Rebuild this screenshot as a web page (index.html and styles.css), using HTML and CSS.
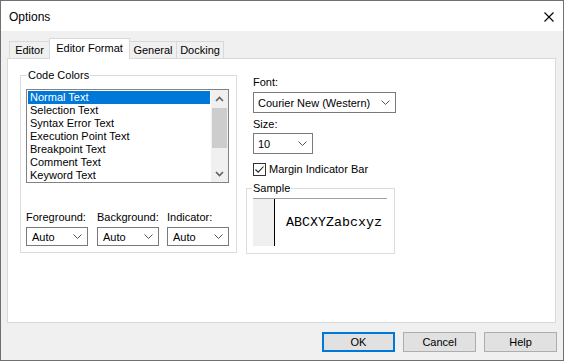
FILE: index.html
```html
<!DOCTYPE html>
<html>
<head>
    <meta charset="UTF-8">
    <link rel="stylesheet" href="styles.css">
</head>
<body>
    <div class="window">
        <div class="titlebar">
            <span class="title">Options</span>
            <svg class="close" width="10" height="10" viewBox="0 0 10 10">
                <path d="M0.5 0.5 L9.5 9.5 M9.5 0.5 L0.5 9.5" stroke="#000" stroke-width="1.1" fill="none"/>
            </svg>
        </div>

        <div class="dialog">
            <div class="tabs">
                <div class="tab tab-editor">Editor</div>
                <div class="tab tab-active">Editor Format</div>
                <div class="tab tab-general">General</div>
                <div class="tab tab-docking">Docking</div>
            </div>

            <div class="panel">
                <div class="group code-colors">
                    <span class="group-title">Code Colors</span>
                    <div class="listbox">
                        <div class="list-items">
                            <div class="list-item selected">Normal Text</div>
                            <div class="list-item">Selection Text</div>
                            <div class="list-item">Syntax Error Text</div>
                            <div class="list-item">Execution Point Text</div>
                            <div class="list-item">Breakpoint Text</div>
                            <div class="list-item">Comment Text</div>
                            <div class="list-item">Keyword Text</div>
                        </div>
                        <div class="scrollbar">
                            <div class="scroll-btn">
                                <svg width="9" height="6" viewBox="0 0 9 6"><path d="M1 5 L4.5 1.5 L8 5" stroke="#606060" stroke-width="1.6" fill="none"/></svg>
                            </div>
                            <div class="scroll-track">
                                <div class="scroll-thumb"></div>
                            </div>
                            <div class="scroll-btn">
                                <svg width="9" height="6" viewBox="0 0 9 6"><path d="M1 1 L4.5 4.5 L8 1" stroke="#606060" stroke-width="1.6" fill="none"/></svg>
                            </div>
                        </div>
                    </div>

                    <div class="color-pickers">
                        <div class="picker">
                            <label>Foreground:</label>
                            <div class="combo small">
                                <span>Auto</span>
                                <svg width="9" height="5" viewBox="0 0 9 5"><path d="M0.5 0.5 L4.5 4.5 L8.5 0.5" stroke="#555" stroke-width="1" fill="none"/></svg>
                            </div>
                        </div>
                        <div class="picker">
                            <label>Background:</label>
                            <div class="combo small">
                                <span>Auto</span>
                                <svg width="9" height="5" viewBox="0 0 9 5"><path d="M0.5 0.5 L4.5 4.5 L8.5 0.5" stroke="#555" stroke-width="1" fill="none"/></svg>
                            </div>
                        </div>
                        <div class="picker">
                            <label>Indicator:</label>
                            <div class="combo small">
                                <span>Auto</span>
                                <svg width="9" height="5" viewBox="0 0 9 5"><path d="M0.5 0.5 L4.5 4.5 L8.5 0.5" stroke="#555" stroke-width="1" fill="none"/></svg>
                            </div>
                        </div>
                    </div>
                </div>

                <div class="right-col">
                    <label class="field-label first">Font:</label>
                    <div class="combo font-combo">
                        <span>Courier New (Western)</span>
                        <svg width="9" height="5" viewBox="0 0 9 5"><path d="M0.5 0.5 L4.5 4.5 L8.5 0.5" stroke="#555" stroke-width="1" fill="none"/></svg>
                    </div>

                    <label class="field-label">Size:</label>
                    <div class="combo size-combo">
                        <span>10</span>
                        <svg width="9" height="5" viewBox="0 0 9 5"><path d="M0.5 0.5 L4.5 4.5 L8.5 0.5" stroke="#555" stroke-width="1" fill="none"/></svg>
                    </div>

                    <div class="check-row">
                        <div class="checkbox">
                            <svg width="11" height="11" viewBox="0 0 11 11"><path d="M1.5 5.5 L4.2 8.2 L9.5 2.5" stroke="#222" stroke-width="1.1" fill="none"/></svg>
                        </div>
                        <span>Margin Indicator Bar</span>
                    </div>

                    <div class="group sample-group">
                        <span class="group-title">Sample</span>
                        <div class="sample">
                            <div class="sample-margin"></div>
                            <div class="sample-text">ABCXYZabcxyz</div>
                        </div>
                    </div>
                </div>
            </div>

            <div class="buttons">
                <button class="default">OK</button>
                <button>Cancel</button>
                <button>Help</button>
            </div>
        </div>
    </div>
</body>
</html>
```

FILE: styles.css
```css
body {
    margin: 0;
    font-family: "Liberation Sans", Arial, sans-serif;
    font-size: 11px;
    color: #000;
}
.window {
    width: 564px;
    height: 361px;
    box-sizing: border-box;
    border: 1px solid #707070;
    display: flex;
    flex-direction: column;
    background: #fff;
}
.titlebar {
    height: 30px;
    display: flex;
    align-items: center;
    padding: 0 9px 0 8px;
    flex-shrink: 0;
}
.title {
    flex: 1;
    font-size: 12px;
    padding-top: 1px;
}
.close {
    margin-top: 1px;
}
.dialog {
    flex: 1;
    background: #f0f0f0;
    display: flex;
    flex-direction: column;
}

/* tabs */
.tabs {
    height: 27px;
    display: flex;
    align-items: flex-end;
    padding-left: 8px;
}
.tab {
    box-sizing: border-box;
    height: 17px;
    border: 1px solid #d9d9d9;
    border-bottom: none;
    padding-top: 2px;
    line-height: 13px;
    text-align: center;
    background: #f0f0f0;
    margin-left: -1px;
}
.tab-editor {
    width: 41px;
    margin-left: 0;
}
.tab-active {
    width: 81px;
    height: 21px;
    padding-top: 3px;
    background: #fff;
    margin-bottom: -1px;
    position: relative;
    z-index: 1;
}
.tab-general {
    width: 48px;
}
.tab-docking {
    width: 48px;
}

/* panel */
.panel {
    box-sizing: border-box;
    height: 265px;
    margin: 0 7px 0 6px;
    background: #fff;
    border: 1px solid #d9d9d9;
    padding: 16px 0 0 12px;
    display: flex;
    align-items: flex-start;
}
.group {
    position: relative;
    box-sizing: border-box;
    border: 1px solid #dcdcdc;
}
.group-title {
    position: absolute;
    top: -7px;
    left: 6px;
    padding: 0 1px;
    line-height: 13px;
    background: #fff;
}
.code-colors {
    width: 217px;
    height: 178px;
    padding: 13px 0 0 5px;
}

/* list */
.listbox {
    box-sizing: border-box;
    width: 203px;
    height: 94px;
    border: 1px solid #828282;
    display: flex;
}
.list-items {
    flex: 1;
    padding: 1px 1px 0;
}
.list-item {
    height: 13px;
    line-height: 13px;
    padding-left: 2px;
    white-space: nowrap;
}
.list-item.selected {
    background: #0078d7;
    color: #fff;
}
.scrollbar {
    width: 17px;
    background: #f0f0f0;
    display: flex;
    flex-direction: column;
}
.scroll-btn {
    height: 17px;
    display: flex;
    align-items: center;
    justify-content: center;
}
.scroll-track {
    flex: 1;
    padding: 1px 1px 0;
}
.scroll-thumb {
    height: 40px;
    background: #cdcdcd;
}

/* combos */
.color-pickers {
    display: grid;
    grid-template-columns: 71px 70px 62px;
    margin-top: 28px;
}
.picker label {
    display: block;
    line-height: 13px;
    margin-bottom: 3px;
}
.combo {
    box-sizing: border-box;
    height: 21px;
    border: 1px solid #7a7a7a;
    background: #fff;
    display: flex;
    align-items: center;
    justify-content: space-between;
    padding: 0 5px 0 4px;
}
.combo.small {
    width: 62px;
    height: 19px;
    padding-left: 5px;
}
.font-combo {
    width: 143px;
}
.size-combo {
    width: 60px;
}

/* right column */
.right-col {
    width: 149px;
    margin-left: 9px;
    display: flex;
    flex-direction: column;
    align-items: flex-start;
}
.field-label {
    line-height: 13px;
    margin: 5px 0 2px 7px;
}
.field-label.first {
    margin: 1px 0 3px 7px;
}
.right-col .combo {
    margin-left: 7px;
}
.check-row {
    display: flex;
    align-items: center;
    gap: 3px;
    margin: 9px 0 0 7px;
    line-height: 13px;
}
.checkbox {
    box-sizing: border-box;
    width: 13px;
    height: 13px;
    border: 1px solid #333;
    background: #fff;
    display: flex;
    align-items: center;
    justify-content: center;
}
.sample-group {
    width: 149px;
    height: 66px;
    margin-top: 12px;
    padding: 9px 0 0 6px;
}
.sample-group .group-title {
    left: 5px;
}
.sample {
    width: 134px;
    height: 48px;
    box-sizing: border-box;
    border-top: 1px solid #a0a0a0;
    display: flex;
}
.sample-margin {
    width: 21px;
    background: #f0f0f0;
    border-right: 1px solid #000;
}
.sample-text {
    font-family: "Liberation Mono", "Courier New", monospace;
    font-size: 13.33px;
    padding-left: 11px;
    display: flex;
    align-items: center;
}

/* buttons */
.buttons {
    display: flex;
    justify-content: flex-end;
    gap: 8px;
    padding: 9px 6px 8px 0;
}
button {
    box-sizing: border-box;
    width: 73px;
    height: 20px;
    font-family: inherit;
    font-size: 11px;
    color: #000;
    background: #e1e1e1;
    border: 1px solid #adadad;
    padding: 0;
}
button.default {
    border: 2px solid #0078d7;
}
```
